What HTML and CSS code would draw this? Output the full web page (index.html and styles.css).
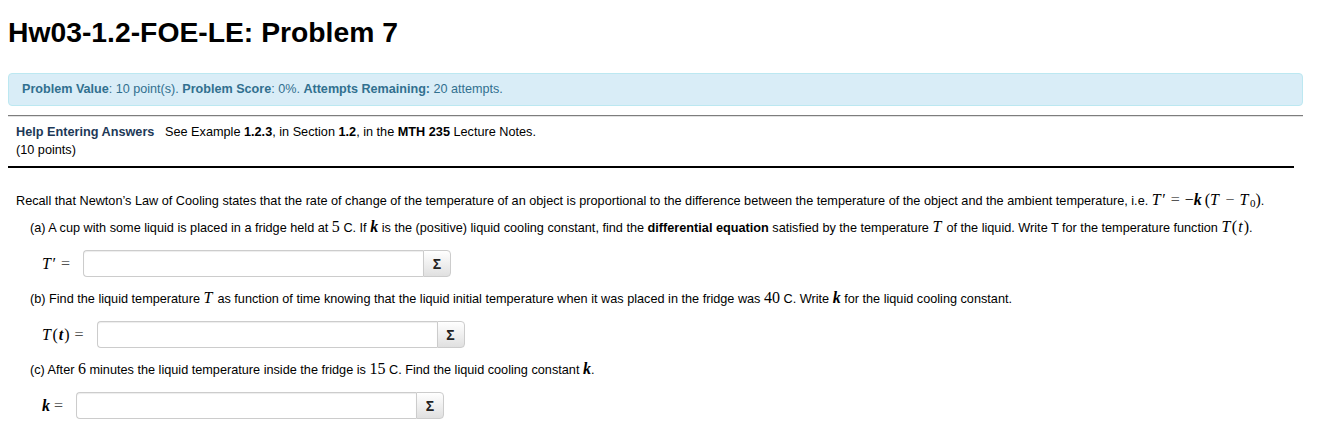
FILE: index.html
```html
<!DOCTYPE html>
<html>
<head>
<meta charset="utf-8">
<link rel="stylesheet" href="styles.css">
</head>
<body>
<div class="page">
  <h1 class="title">Hw03-1.2-FOE-LE: Problem 7</h1>
  <div class="alert"><b>Problem Value</b>: 10 point(s). <b>Problem Score</b>: 0%. <b>Attempts Remaining:</b> 20 attempts.</div>
  <div class="rule-gray"></div>
  <div class="help">
    <div><span class="help-link">Help Entering Answers</span>&nbsp;&nbsp; See Example <b>1.2.3</b>, in Section <b>1.2</b>, in the <b>MTH 235</b> Lecture Notes.</div>
    <div>(10 points)</div>
  </div>
  <div class="rule-black"></div>
  <div class="problem">
    <p class="intro">Recall that Newton’s Law of Cooling states that the rate of change of the temperature of an object is proportional to the difference between the temperature of the object and the ambient temperature, i.e. <span class="m"><i class="T">T</i>′<span class="op">=</span>−<i class="bk">k</i><span class="sp"></span>(<i class="T">T</i><span class="op">−</span><i class="T">T</i><sub>0</sub>)</span>.</p>
    <p class="q qa">(a) A cup with some liquid is placed in a fridge held at <span class="m">5</span> C. If <span class="m"><i class="bk">k</i></span> is the (positive) liquid cooling constant, find the <b>differential equation</b> satisfied by the temperature <span class="m"><i class="T">T</i></span> of the liquid. Write T for the temperature function <span class="m"><i class="T">T</i>(<i class="t">t</i>)</span>.</p>
    <div class="ans">
      <span class="m lbl"><i class="T">T</i>′<span class="op">=</span></span>
      <span class="field"><span class="box"></span><span class="sig">Σ</span></span>
    </div>
    <p class="q">(b) Find the liquid temperature <span class="m"><i class="T">T</i></span> as function of time knowing that the liquid initial temperature when it was placed in the fridge was <span class="m">40</span> C. Write <span class="m"><i class="bk">k</i></span> for the liquid cooling constant.</p>
    <div class="ans">
      <span class="m lbl"><i class="T">T</i>(<i class="bk t">t</i>)<span class="op">=</span></span>
      <span class="field"><span class="box"></span><span class="sig">Σ</span></span>
    </div>
    <p class="q">(c) After <span class="m">6</span> minutes the liquid temperature inside the fridge is <span class="m">15</span> C. Find the liquid cooling constant <span class="m"><i class="bk">k</i></span>.</p>
    <div class="ans">
      <span class="m lbl lk"><i class="bk">k</i><span class="op">=</span></span>
      <span class="field"><span class="box"></span><span class="sig">Σ</span></span>
    </div>
  </div>
</div>
</body>
</html>
```
FILE: styles.css
```css
html, body { margin: 0; padding: 0; background: #fff; }
body { font-family: "Liberation Sans", Arial, sans-serif; font-size: 12.7px; color: #000; }
.page { padding-left: 8px; width: 1295px; }
.title { font-size: 28.3px; font-weight: bold; line-height: 32px; margin: 0; padding-top: 16px; }
.alert {
  margin-top: 25px; box-sizing: border-box; height: 33px; line-height: 31px;
  background: #d9edf7; border: 1px solid #bce8f1; border-radius: 4px;
  color: #31708f; padding: 0 13px; font-size: 12.6px;
}
.rule-gray { margin-top: 9px; border-top: 1px solid #7d7d7d; border-bottom: 1px solid #e2e2e2; }
.help { padding: 6px 8px 0; line-height: 18px; }
.help-link { color: #1d3957; font-weight: bold; }
.rule-black { margin-top: 7px; width: 1286px; border-top: 2px solid #000; }
.problem { padding-left: 8px; }
.problem p { margin: 0; line-height: 18px; height: 18px; white-space: nowrap; }
.intro { margin-top: 24px !important; }
.q { margin-left: 14px !important; margin-top: 11px !important; }
.qa { margin-top: 9px !important; }
.m { font-family: "Liberation Serif", "DejaVu Serif", serif; font-size: 16px; line-height: 0; }
.m i { font-style: italic; }
.m .T { margin-right: 1.5px; }
.m .t { margin: 0 1px; }
.m .bk { font-weight: bold; }
.m sub { font-size: 11px; vertical-align: -2px; line-height: 0; }
.op { color: #555; padding: 0 5px; }
.sp { padding-left: 3px; }
.ans { display: flex; align-items: center; margin: 13px 0 13px 26px; height: 27px; }
.lbl { margin-right: 8px; white-space: nowrap; line-height: 27px; }
.lk .op { padding-left: 4px; }
.field { display: flex; height: 27px; }
.box {
  width: 340px; box-sizing: border-box; height: 27px;
  border: 1px solid #ccc; border-right: none; border-radius: 4px 0 0 4px;
  box-shadow: inset 0 1px 1px rgba(0,0,0,0.075);
}
.sig {
  width: 28px; box-sizing: border-box; height: 27px;
  border: 1px solid #ccc; border-radius: 0 4px 4px 0;
  background: linear-gradient(#fff, #e0e0e0);
  display: flex; align-items: center; justify-content: center;
  font-family: "Liberation Sans", Arial, sans-serif; font-weight: bold; font-size: 14px; color: #222;
}
```
